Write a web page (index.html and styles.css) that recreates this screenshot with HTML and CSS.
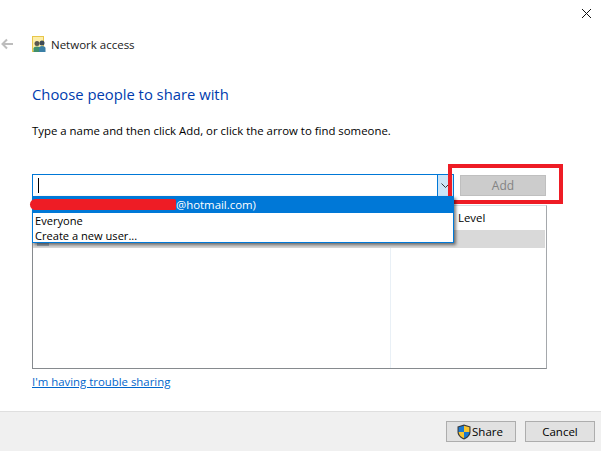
FILE: index.html
```html
<!DOCTYPE html>
<html lang="en">
<head>
<meta charset="utf-8">
<title>Network access</title>
<link rel="stylesheet" href="styles.css">
</head>
<body>
<div class="window">
  <button class="close" aria-label="Close">
    <svg width="12" height="12" viewBox="0 0 12 12"><path d="M1 1l9 9M10 1l-9 9" stroke="#111" stroke-width="1" fill="none"/></svg>
  </button>
  <main class="content">
    <header class="titlebar">
      <svg class="back" width="14" height="12" viewBox="0 0 14 12"><path d="M12 6H2M6 1.500L1.500 6 6 10.500" stroke="#bdbdbd" stroke-width="2" fill="none"/></svg>
      <svg class="netico" width="14" height="16" viewBox="0 0 14 16">
        <rect x="0.500" y="0.500" width="11" height="15" fill="#fdeea8" stroke="#e8c64a"/>
        <circle cx="5" cy="7.500" r="2.500" fill="#5a574e"/>
        <path d="M1.500 16v-3.500c0-1.200 1.500-2 3.500-2s3.500.8 3.500 2V16z" fill="#3f8f6d"/>
        <circle cx="10" cy="7" r="2.500" fill="#3d4b57"/>
        <path d="M7 16v-4c0-1.200 1.500-2 3-2s3.500.8 3.500 2v4z" fill="#3a7fa6"/>
      </svg>
      <span class="apptitle">Network access</span>
    </header>
    <div class="body">
      <h1 class="heading">Choose people to share with</h1>
      <p class="instr">Type a name and then click Add, or click the arrow to find someone.</p>
      <div class="picker">
        <div class="combo">
          <span class="caret"></span>
          <span class="arrow">
            <svg width="9" height="5" viewBox="0 0 9 5"><path d="M.5.500l4 4 4-4" stroke="#3a3a3a" fill="none"/></svg>
          </span>
          <ul class="dropdown">
            <li class="opt selected"><span class="email">@hotmail.com)</span></li>
            <li class="opt">Everyone</li>
            <li class="opt">Create a new user...</li>
          </ul>
          <span class="scribble"></span>
        </div>
        <div class="addwrap">
          <button class="add" disabled>Add</button>
          <span class="redbox"></span>
        </div>
      </div>
      <div class="list">
        <div class="list-head">
          <span class="col-level">Level</span>
        </div>
        <div class="list-row">
          <svg class="rowico" width="12" height="16" viewBox="0 0 12 16"><circle cx="6" cy="5" r="3.500" fill="#6f7f8f"/><path d="M0 16v-3c0-2 3-3 6-3s6 1 6 3v3z" fill="#9aa7b3"/></svg>
        </div>
      </div>
      <a class="trouble" href="#">I'm having trouble sharing</a>
    </div>
  </main>
  <footer class="footer">
    <button class="btn">
      <svg class="shield" width="14" height="16" viewBox="0 0 14 16">
        <path d="M7 .5L13.500 2.500V8c0 3.500-3 6.200-6.500 7.500C3.500 14.200.5 11.500.5 8V2.500z" fill="#3a3a3a"/>
        <path d="M7 1.800V8H1.600V3.300z" fill="#1b78d0"/>
        <path d="M7 1.800l5.400 1.500V8H7z" fill="#f7c52f"/>
        <path d="M1.600 8H7v6.200C4 13 1.800 11 1.600 8z" fill="#f7c52f"/>
        <path d="M7 8h5.400c-.2 3-2.400 5-5.400 6.200z" fill="#1b78d0"/>
      </svg>Share</button>
    <button class="btn">Cancel</button>
  </footer>
</div>
</body>
</html>
```
FILE: styles.css
```css
* { box-sizing: border-box; }
html, body { margin: 0; padding: 0; }
body { width: 601px; height: 451px; overflow: hidden; background: #fff; font-family: "Open Sans", "Noto Sans", sans-serif; font-size: 11px; color: #000; }
.window { position: relative; width: 601px; height: 451px; display: flex; flex-direction: column; }
.close { position: absolute; top: 8px; right: 4px; width: 16px; height: 16px; padding: 0; border: 0; background: none; display: flex; }
.content { flex: 1; display: flex; flex-direction: column; }
.titlebar { display: flex; align-items: center; height: 16px; margin-top: 36px; padding-left: 1px; }
.back { margin-right: 17px; }
.netico { margin-right: 5px; }
.apptitle { font-size: 11.500px; color: #1a1a1a; }
.body { padding-left: 32px; display: flex; flex-direction: column; align-items: flex-start; }
.heading { margin: 32px 0 0; font-size: 14.800px; font-weight: 400; line-height: 20px; color: #003cae; }
.instr { margin: 19px 0 0; font-size: 11.400px; line-height: 16px; }
.picker { display: flex; margin-top: 35px; }
.combo { position: relative; width: 422px; height: 23px; border: 1px solid #0078d7; }
.caret { position: absolute; left: 5px; top: 3px; width: 1px; height: 15px; background: #000; }
.arrow { position: absolute; top: 0; right: 0; bottom: 0; width: 16px; display: flex; align-items: center; justify-content: center; background: #cce4f7; border-left: 1px solid #0078d7; }
.dropdown { position: absolute; z-index: 2; left: -1px; top: 21px; width: 422px; height: 47px; margin: 0; padding: 0; list-style: none; background: #fff; border: 1px solid #0078d7; border-top: 0; box-shadow: 2px 2px 3px rgba(0,0,0,.5); }
.opt { height: 15px; padding-left: 2px; line-height: 15px; font-size: 11.100px; color: #000; }
.selected { height: 17px; line-height: 17px; background: #0078d7; color: #fff; padding-left: 143px; font-size: 11.400px; }
.scribble { position: absolute; z-index: 3; left: -3px; top: 24px; width: 146px; height: 11px; background: #ee1c25; border-radius: 6px 2px 2px 6px; }
.addwrap { position: relative; margin-left: 6px; }
.add { display: block; width: 86px; height: 21px; margin-top: 1px; padding: 0; background: #ccc; border: 1px solid #bfbfbf; color: #838383; font: 12px "Open Sans", sans-serif; }
.redbox { position: absolute; left: -12px; top: -10px; width: 115px; height: 40px; border: 4px solid #ee1c25; pointer-events: none; }
.list { width: 515px; height: 164px; margin-top: 8px; border: 1px solid #868a8e; border-top-color: #d5dfe5; border-right-color: #a5a8ac; background: linear-gradient(#e9f0f6,#e9f0f6) 357px 0 / 1px 100% no-repeat; }
.list-head { display: flex; height: 24px; align-items: center; padding: 0 0 2px 425px; }
.col-level { font-size: 11.400px; }
.list-row { height: 18px; background: #d9d9d9; margin-right: 1px; padding: 0 0 0 4px; overflow: hidden; }
.rowico { display: block; }
.trouble { margin-top: 5px; font-size: 11.400px; line-height: 16px; color: #0066cc; }
.footer { height: 40px; background: #f0f0f0; border-top: 1px solid #dfdfdf; display: flex; justify-content: flex-end; align-items: center; gap: 9px; padding: 0 6px 0 0; }
.btn { width: 70px; height: 21px; padding: 0; display: flex; align-items: center; justify-content: center; background: #e1e1e1; border: 1px solid #adadad; font: 11.500px "Open Sans", sans-serif; color: #000; }
.shield { margin-right: 1px; margin-left: -2px; }
```
